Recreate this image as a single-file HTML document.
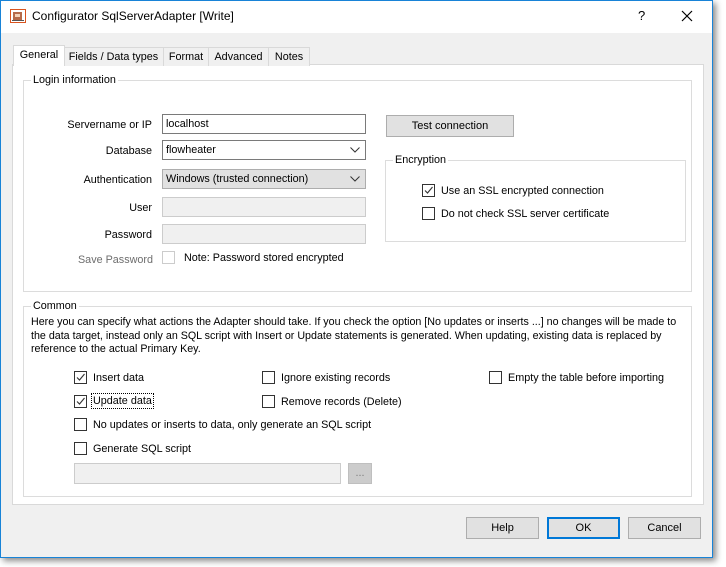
<!DOCTYPE html>
<html><head><style>
*{box-sizing:border-box;margin:0;padding:0}
body{width:726px;height:567px;background:#fff;font-family:"Liberation Sans",sans-serif;font-size:10.8px;color:#000;position:relative;overflow:hidden}
.a{position:absolute;white-space:nowrap;line-height:16px}
#win{position:absolute;left:0;top:0;width:713px;height:558px;background:#f0f0f0;box-shadow:3px 3px 6px rgba(0,0,0,.45)}
#bord{position:absolute;left:0;top:0;width:713px;height:558px;border:1px solid #1883d7;pointer-events:none}
#title{position:absolute;left:0;top:0;width:713px;height:33px;background:#fff}
.grp{position:absolute;border:1px solid #dcdcdc}
.lg{position:absolute;top:-8px;left:7px;background:#fff;padding:0 2px;line-height:14px}
.in{position:absolute;height:20px;border:1px solid #7a7a7a;background:#fff;padding:2px 3px;line-height:15px}
.dis{border-color:#ccc;background:#f0f0f0}
.btn{position:absolute;height:22px;border:1px solid #adadad;background:#e1e1e1;text-align:center;line-height:21px;font-size:11px}
.cb{position:absolute;width:13px;height:13px;border:1px solid #333;background:#fff}
.cb svg{position:absolute;left:0;top:0}
.tab{position:absolute;top:47px;height:19px;border:1px solid #d9d9d9;border-bottom:none;background:#f0f0f0;line-height:18px;text-align:center;white-space:nowrap}
.r{text-align:right}
</style></head><body>
<div id="win">
<div id="title">
<svg class="a" style="left:10px;top:9px" width="16" height="14" viewBox="0 0 16 14"><rect x="0.5" y="0.5" width="15" height="13" fill="#fff" stroke="#d9541f"/><rect x="3" y="3" width="9" height="8" fill="#b56b4a"/><rect x="5" y="5" width="5" height="3" fill="#f3d2b8"/><rect x="2" y="11" width="12" height="1" fill="#555"/></svg>
<div class="a" style="left:32px;top:8px;font-size:12px">Configurator SqlServerAdapter [Write]</div>
<div class="a" style="left:638px;top:8px;font-size:13px">?</div>
<svg class="a" style="left:681px;top:10px" width="12" height="12"><path d="M1 1L11 11M11 1L1 11" stroke="#000" stroke-width="1.2"/></svg>
</div>
<div class="a" style="left:12px;top:64px;width:692px;height:441px;background:#fff;border:1px solid #d9d9d9"></div>
<div class="tab" style="left:63px;width:101px">Fields / Data types</div>
<div class="tab" style="left:163px;width:46px">Format</div>
<div class="tab" style="left:208px;width:61px">Advanced</div>
<div class="tab" style="left:268px;width:42px">Notes</div>
<div class="a" style="left:13px;top:45px;width:52px;height:21px;background:#fff;border:1px solid #d9d9d9;border-bottom:none;text-align:center;line-height:19px">General</div>

<div class="grp" style="left:23px;top:80px;width:669px;height:212px"><div class="lg">Login information</div></div>
<div class="a r" style="left:40px;top:117px;width:112px">Servername or IP</div>
<div class="in" style="left:162px;top:114px;width:204px">localhost</div>
<div class="a r" style="left:40px;top:143px;width:112px">Database</div>
<div class="in" style="left:162px;top:140px;width:204px">flowheater<svg class="a" style="right:5px;top:6px" width="10" height="6"><path d="M0.5 0.5L5 5L9.5 0.5" fill="none" stroke="#333"/></svg></div>
<div class="a r" style="left:40px;top:172px;width:112px">Authentication</div>
<div class="in" style="left:162px;top:169px;width:204px;background:#e1e1e1;border-color:#adadad">Windows (trusted connection)<svg class="a" style="right:5px;top:6px" width="10" height="6"><path d="M0.5 0.5L5 5L9.5 0.5" fill="none" stroke="#333"/></svg></div>
<div class="a r" style="left:40px;top:200px;width:112px">User</div>
<div class="in dis" style="left:162px;top:197px;width:204px"></div>
<div class="a r" style="left:40px;top:227px;width:112px">Password</div>
<div class="in dis" style="left:162px;top:224px;width:204px"></div>
<div class="a r" style="left:40px;top:252px;width:113px;color:#6d6d6d">Save Password</div>
<div class="cb" style="left:162px;top:251px;border-color:#ccc"></div>
<div class="a" style="left:184px;top:250px">Note: Password stored encrypted</div>
<div class="btn" style="left:386px;top:115px;width:128px">Test connection</div>
<div class="grp" style="left:385px;top:160px;width:301px;height:82px"><div class="lg">Encryption</div></div>
<div class="cb" style="left:422px;top:184px"><svg width="11" height="11"><path d="M2 5.5L4.5 8L9.5 2" fill="none" stroke="#333" stroke-width="1.1"/></svg></div>
<div class="a" style="left:441px;top:183px">Use an SSL encrypted connection</div>
<div class="cb" style="left:422px;top:207px"></div>
<div class="a" style="left:441px;top:206px">Do not check SSL server certificate</div>

<div class="grp" style="left:23px;top:306px;width:669px;height:191px"><div class="lg">Common</div></div>
<div class="a" style="left:31px;top:316px;width:662px;white-space:normal;line-height:13.5px;font-size:10.7px">Here you can specify what actions the Adapter should take. If you check the option [No updates or inserts ...] no changes will be made to the data target, instead only an SQL script with Insert or Update statements is generated. When updating, existing data is replaced by reference to the actual Primary Key.</div>
<div class="cb" style="left:74px;top:371px"><svg width="11" height="11"><path d="M2 5.5L4.5 8L9.5 2" fill="none" stroke="#333" stroke-width="1.1"/></svg></div>
<div class="a" style="left:93px;top:370px">Insert data</div>
<div class="cb" style="left:74px;top:395px"><svg width="11" height="11"><path d="M2 5.5L4.5 8L9.5 2" fill="none" stroke="#333" stroke-width="1.1"/></svg></div>
<div class="a" style="left:91px;top:393px;border:1px dotted #000;padding:0 1px;line-height:14px">Update data</div>
<div class="cb" style="left:74px;top:418px"></div>
<div class="a" style="left:93px;top:417px">No updates or inserts to data, only generate an SQL script</div>
<div class="cb" style="left:74px;top:442px"></div>
<div class="a" style="left:93px;top:441px">Generate SQL script</div>
<div class="in dis" style="left:74px;top:463px;width:267px;height:21px"></div>
<div class="a" style="left:348px;top:463px;width:24px;height:21px;background:#ccc;border:1px solid #bfbfbf;text-align:center;color:#777;line-height:18px">...</div>
<div class="cb" style="left:262px;top:371px"></div>
<div class="a" style="left:281px;top:370px">Ignore existing records</div>
<div class="cb" style="left:262px;top:395px"></div>
<div class="a" style="left:281px;top:394px">Remove records (Delete)</div>
<div class="cb" style="left:489px;top:371px"></div>
<div class="a" style="left:508px;top:370px">Empty the table before importing</div>

<div class="btn" style="left:466px;top:517px;width:73px">Help</div>
<div class="btn" style="left:547px;top:517px;width:73px;border:2px solid #0078d7;line-height:19px">OK</div>
<div class="btn" style="left:628px;top:517px;width:73px">Cancel</div>
<div id="bord"></div>
</div>
</body></html>
